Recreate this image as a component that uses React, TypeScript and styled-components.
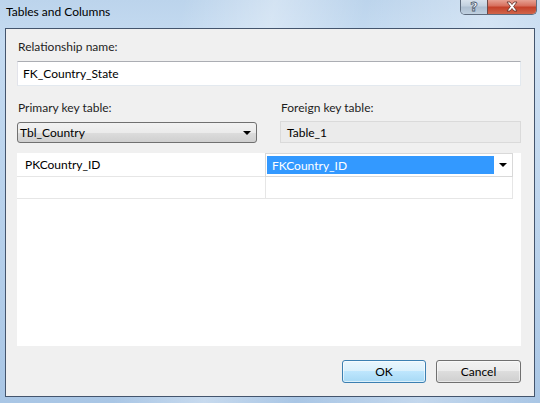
import React from 'react';
import styled, { createGlobalStyle } from 'styled-components';

const GlobalStyle = createGlobalStyle`
  html, body {
    margin: 0;
    padding: 0;
    background: #ffffff;
  }
  body {
    font-family: Lato, "Noto Sans", "Liberation Sans", sans-serif;
    font-size: 12px;
    color: #000;
  }
`;

const Frame = styled.div`
  width: 540px;
  height: 403px;
  display: flex;
  flex-direction: column;
  background:
    linear-gradient(100deg, rgba(255,255,255,0) 0%, rgba(255,255,255,0) 30%, rgba(255,255,255,0.35) 45%, rgba(255,255,255,0) 60%, rgba(255,255,255,0.3) 80%, rgba(255,255,255,0) 100%),
    linear-gradient(180deg, #bcd4ec 0%, #c5dbf1 10%, #a9c6e5 100%);
  overflow: hidden;
`;

const TitleBar = styled.div`
  height: 28px;
  display: flex;
  align-items: flex-start;
  justify-content: space-between;
  padding-left: 6px;
  padding-right: 3px;
`;

const Title = styled.div`
  line-height: 24px;
  font-size: 12px;
  color: #000;
`;

const CaptionButtons = styled.div`
  display: flex;
  height: 15px;
  border: 1px solid #5e6b7d;
  border-top: none;
  border-radius: 0 0 5px 5px;
  overflow: hidden;
  margin-top: -1px;
`;

const CaptionButton = styled.div<{ $close?: boolean }>`
  width: ${p => (p.$close ? '48px' : '26px')};
  height: 100%;
  display: flex;
  align-items: center;
  justify-content: center;
  background: ${p =>
    p.$close
      ? 'linear-gradient(180deg, #e9a99c 0%, #d7705e 45%, #c4412a 55%, #d0654a 100%)'
      : 'linear-gradient(180deg, #dbe4ee 0%, #c3d1df 45%, #aebfd1 55%, #c0d0e0 100%)'};
  border-left: ${p => (p.$close ? '1px solid #6b4a48' : 'none')};
`;

const HelpGlyph = styled.span`
  font-family: "DejaVu Sans", sans-serif;
  font-weight: bold;
  font-size: 13px;
  line-height: 15px;
  color: #fff;
  -webkit-text-stroke: 0.8px #4a5a6e;
`;

const Client = styled.div`
  flex: 1;
  margin: 0 5px 6px 5px;
  border: 1px solid #44556d;
  background: #f0f0f0;
  display: flex;
  flex-direction: column;
  padding: 10px 13px 13px 11px;
`;

const Label = styled.div`
  height: 16px;
  line-height: 16px;
  font-size: 12px;
  color: #1e1e1e;
  padding-left: 1px;
`;

const TextBox = styled.div`
  margin-top: 6px;
  height: 25px;
  box-sizing: border-box;
  background: #fff;
  border: 1px solid #e3e9ef;
  border-top-color: #abadb3;
  border-left-color: #e2e3ea;
  display: flex;
  align-items: center;
  padding-left: 5px;
`;

const TwoCols = styled.div`
  margin-top: 14px;
  display: grid;
  grid-template-columns: 240px 1fr;
  column-gap: 23px;
`;

const Column = styled.div`
  display: flex;
  flex-direction: column;
`;

const ComboBox = styled.div`
  margin-top: 6px;
  height: 21px;
  box-sizing: border-box;
  border: 1px solid #707070;
  border-radius: 3px;
  background: linear-gradient(180deg, #f2f2f2 0%, #ebebeb 50%, #dddddd 50%, #cfcfcf 100%);
  display: flex;
  align-items: center;
  justify-content: space-between;
  padding: 0 5px 0 2px;
`;

const Arrow = styled.span`
  width: 0;
  height: 0;
  border-left: 4px solid transparent;
  border-right: 4px solid transparent;
  border-top: 4px solid #000;
`;

const ReadOnlyBox = styled.div`
  margin-top: 5px;
  height: 22px;
  box-sizing: border-box;
  border: 1px solid #dadada;
  background: #ebebeb;
  display: flex;
  align-items: center;
  padding-left: 6px;
`;

const GridArea = styled.div`
  margin-top: 10px;
  flex: 1;
  background: #fff;
`;

const GridRow = styled.div<{ $h: number }>`
  display: grid;
  grid-template-columns: 248px 248px;
  height: ${p => p.$h}px;
`;

const Cell = styled.div<{ $right?: boolean }>`
  box-sizing: border-box;
  border-bottom: 1px solid #e6e6e6;
  border-left: ${p => (p.$right ? '1px solid #e6e6e6' : 'none')};
  border-right: ${p => (p.$right ? '1px solid #e6e6e6' : 'none')};
  display: flex;
  align-items: center;
  padding-left: 8px;
`;

const EditorCell = styled.div`
  box-sizing: border-box;
  border: 1px solid #d9d9d9;
  display: flex;
  align-items: center;
  justify-content: space-between;
  padding: 2px 5px 2px 1px;
`;

const Selected = styled.div`
  width: 227px;
  height: 18px;
  background: #3399ff;
  color: #fff;
  display: flex;
  align-items: center;
  padding-left: 5px;
  box-sizing: border-box;
`;

const ButtonRow = styled.div`
  margin-top: 14px;
  display: flex;
  justify-content: flex-end;
  gap: 10px;
`;

const DialogButton = styled.div<{ $default?: boolean }>`
  width: ${p => (p.$default ? '84px' : '85px')};
  height: 23px;
  box-sizing: border-box;
  border-radius: 3px;
  border: 1px solid ${p => (p.$default ? '#3c7fb1' : '#707070')};
  background: ${p =>
    p.$default
      ? 'linear-gradient(180deg, #eaf6fd 0%, #d9f0fc 50%, #bee6fd 50%, #a7d9f5 100%)'
      : 'linear-gradient(180deg, #f2f2f2 0%, #ebebeb 50%, #dddddd 50%, #cfcfcf 100%)'};
  box-shadow: inset 0 0 0 1px ${p => (p.$default ? 'rgba(255,255,255,0.6)' : 'rgba(255,255,255,0.5)')};
  display: flex;
  align-items: center;
  justify-content: center;
  font-size: 12px;
`;

const App: React.FC = () => {
  return (
    <Frame>
      <GlobalStyle />
      <TitleBar>
        <Title>Tables and Columns</Title>
        <CaptionButtons>
          <CaptionButton>
            <HelpGlyph>?</HelpGlyph>
          </CaptionButton>
          <CaptionButton $close>
            <svg width="14" height="11" viewBox="0 0 14 11">
              <path
                d="M2 1 L5 1 L7 3.5 L9 1 L12 1 L8.6 5.5 L12 10 L9 10 L7 7.5 L5 10 L2 10 L5.4 5.5 Z"
                fill="#fff"
                stroke="#5a2a22"
                strokeWidth="0.8"
              />
            </svg>
          </CaptionButton>
        </CaptionButtons>
      </TitleBar>
      <Client>
        <Label>Relationship name:</Label>
        <TextBox>FK_Country_State</TextBox>
        <TwoCols>
          <Column>
            <Label>Primary key table:</Label>
            <ComboBox>
              <span>Tbl_Country</span>
              <Arrow />
            </ComboBox>
          </Column>
          <Column>
            <Label>Foreign key table:</Label>
            <ReadOnlyBox>Table_1</ReadOnlyBox>
          </Column>
        </TwoCols>
        <GridArea>
          <GridRow $h={24}>
            <Cell>PKCountry_ID</Cell>
            <EditorCell>
              <Selected>FKCountry_ID</Selected>
              <Arrow />
            </EditorCell>
          </GridRow>
          <GridRow $h={22}>
            <Cell />
            <Cell $right />
          </GridRow>
        </GridArea>
        <ButtonRow>
          <DialogButton $default>OK</DialogButton>
          <DialogButton>Cancel</DialogButton>
        </ButtonRow>
      </Client>
    </Frame>
  );
};

export default App;
